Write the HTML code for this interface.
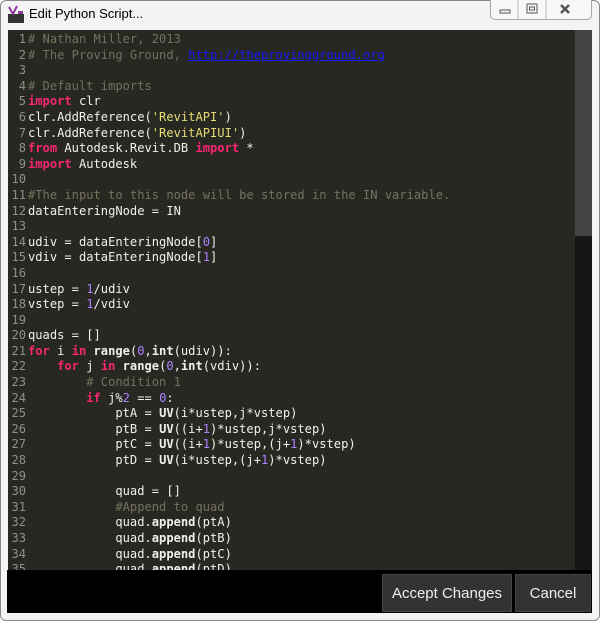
<!DOCTYPE html>
<html><head><style>
body{margin:0;width:600px;height:621px;background:#fff;position:relative;overflow:hidden;font-family:"Liberation Sans",sans-serif}
.frame{position:absolute;left:0;top:0;width:598px;height:619px;border:1px solid #888;border-radius:6px;background:#f3f3f3}
.title{position:absolute;left:29px;top:6px;font-size:13px;color:#000}
.ctrl{position:absolute;left:490px;top:0;width:100px;height:19px;border:1px solid #aaa;border-top:none;border-radius:0 0 5px 5px;background:#f7f7f7}
.ed{position:absolute;left:8px;top:30px;width:567px;height:540px;background:#272822;overflow:hidden}
.sb{position:absolute;left:575px;top:30px;width:17px;height:206px;background:#444}
.sb2{position:absolute;left:575px;top:236px;width:17px;height:334px;background:#151515}
.bar{position:absolute;left:7px;top:570px;width:585px;height:43px;background:#000}
.btn{position:absolute;top:574px;height:36px;background:#333;border:1px solid #444;color:#eee;font-size:15px;line-height:38px;text-align:center}
pre{margin:0;position:absolute;left:0;top:2px;font-family:"DejaVu Sans Mono","Liberation Mono",monospace;font-size:12.1px;line-height:15.6px;color:#f1f1ea}
.n{color:#8f908a;display:inline-block;width:18px;text-align:right;margin-right:2px;font-weight:normal}
.c{color:#75715e}.k{color:#f92672;font-weight:bold}.s{color:#e6db74}.m{color:#ae81ff}.b{font-weight:bold}
.l{color:#1a1aff;text-decoration:underline}
</style></head><body>
<div class="frame"></div>
<svg style="position:absolute;left:8px;top:5px" width="16" height="18"><rect x="0" y="9" width="16" height="9" fill="#333"/><path d="M1 2 L5 9 L9 1" stroke="#8a3a9a" stroke-width="2" fill="none"/><rect x="10" y="6" width="5" height="3" fill="#8a3a9a"/></svg>
<div class="title">Edit Python Script...</div>
<div class="ctrl"><svg width="100" height="19"><line x1="27" y1="0" x2="27" y2="19" stroke="#bbb"/><line x1="55" y1="0" x2="55" y2="19" stroke="#bbb"/><rect x="9" y="10" width="10" height="3" fill="none" stroke="#555"/><rect x="36" y="4" width="10" height="9" fill="none" stroke="#555"/><rect x="38.5" y="7" width="5" height="3" fill="none" stroke="#555"/><path d="M70 5 L78 13 M78 5 L70 13" stroke="#555" stroke-width="2.5"/></svg></div>
<div class="ed"><pre>
<span class="n">1</span><span class="c"># Nathan Miller, 2013</span>
<span class="n">2</span><span class="c"># The Proving Ground, </span><span class="l">http://theprovingground.org</span>
<span class="n">3</span>
<span class="n">4</span><span class="c"># Default imports</span>
<span class="n">5</span><span class="k">import</span> clr
<span class="n">6</span>clr.AddReference(<span class="s">'RevitAPI'</span>)
<span class="n">7</span>clr.AddReference(<span class="s">'RevitAPIUI'</span>)
<span class="n">8</span><span class="k">from</span> Autodesk.Revit.DB <span class="k">import</span> *
<span class="n">9</span><span class="k">import</span> Autodesk
<span class="n">10</span>
<span class="n">11</span><span class="c">#The input to this node will be stored in the IN variable.</span>
<span class="n">12</span>dataEnteringNode = IN
<span class="n">13</span>
<span class="n">14</span>udiv = dataEnteringNode[<span class="m">0</span>]
<span class="n">15</span>vdiv = dataEnteringNode[<span class="m">1</span>]
<span class="n">16</span>
<span class="n">17</span>ustep = <span class="m">1</span>/udiv
<span class="n">18</span>vstep = <span class="m">1</span>/vdiv
<span class="n">19</span>
<span class="n">20</span>quads = []
<span class="n">21</span><span class="k">for</span> i <span class="k">in</span> <span class="b">range</span>(<span class="m">0</span>,<span class="b">int</span>(udiv)):
<span class="n">22</span>    <span class="k">for</span> j <span class="k">in</span> <span class="b">range</span>(<span class="m">0</span>,<span class="b">int</span>(vdiv)):
<span class="n">23</span>        <span class="c"># Condition 1</span>
<span class="n">24</span>        <span class="k">if</span> j%<span class="m">2</span> == <span class="m">0</span>:
<span class="n">25</span>            ptA = <span class="b">UV</span>(i*ustep,j*vstep)
<span class="n">26</span>            ptB = <span class="b">UV</span>((i+<span class="m">1</span>)*ustep,j*vstep)
<span class="n">27</span>            ptC = <span class="b">UV</span>((i+<span class="m">1</span>)*ustep,(j+<span class="m">1</span>)*vstep)
<span class="n">28</span>            ptD = <span class="b">UV</span>(i*ustep,(j+<span class="m">1</span>)*vstep)
<span class="n">29</span>
<span class="n">30</span>            quad = []
<span class="n">31</span>            <span class="c">#Append to quad</span>
<span class="n">32</span>            quad.<span class="b">append</span>(ptA)
<span class="n">33</span>            quad.<span class="b">append</span>(ptB)
<span class="n">34</span>            quad.<span class="b">append</span>(ptC)
<span class="n">35</span>            quad.<span class="b">append</span>(ptD)
</pre></div>
<div class="sb"></div><div class="sb2"></div>
<div class="bar"></div>
<div class="btn" style="left:382px;width:128px">Accept Changes</div>
<div class="btn" style="left:515px;width:74px">Cancel</div>
</body></html>
